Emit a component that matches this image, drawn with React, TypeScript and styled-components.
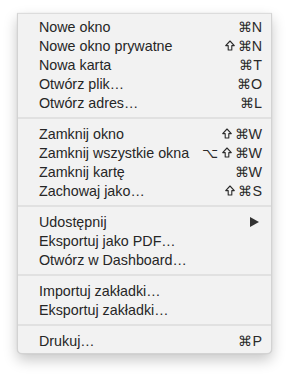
import React from "react"
import styled, { createGlobalStyle } from "styled-components"

const GlobalStyle = createGlobalStyle`
  html, body {
    margin: 0;
    padding: 0;
    background: #ffffff;
  }
  body {
    font-family: "Liberation Sans", Arial, sans-serif;
    -webkit-font-smoothing: antialiased;
  }
`

const Page = styled.div`
  width: 289px;
  height: 375px;
  padding: 13px 0 0 17px;
  box-sizing: border-box;
`

const Menu = styled.div`
  width: 255px;
  box-sizing: border-box;
  background: #f2f2f2;
  border: 1px solid #d3d3d3;
  border-top-color: #dcdcdc;
  border-radius: 0 0 5px 5px;
  padding: 3px 0 3px;
  box-shadow: 0 6px 14px rgba(0, 0, 0, 0.22), 0 0 1px rgba(0, 0, 0, 0.2);
`

const Item = styled.div`
  display: flex;
  align-items: center;
  justify-content: space-between;
  height: 19px;
  padding: 0 9px 0 21px;
  font-size: 14.3px;
  color: #262626;
  white-space: nowrap;
`

const Shortcut = styled.span`
  display: flex;
  align-items: center;
  gap: 1px;
  color: #2a2a2a;
`

const OptionKey = styled.span`
  margin-right: 3px;
`

const ShiftIcon = styled.svg`
  width: 10px;
  height: 11px;
  margin-right: 2px;
`

const Separator = styled.div`
  height: 2px;
  background: #e1e1e1;
  margin: 5px 0;
`

const Arrow = styled.svg`
  width: 9px;
  height: 10px;
  margin-right: 3px;
`

type Entry =
  | { label: string; keys?: string; option?: boolean; shift?: boolean; submenu?: boolean }
  | "sep"

const entries: Entry[] = [
  { label: "Nowe okno", keys: "⌘N" },
  { label: "Nowe okno prywatne", shift: true, keys: "⌘N" },
  { label: "Nowa karta", keys: "⌘T" },
  { label: "Otwórz plik…", keys: "⌘O" },
  { label: "Otwórz adres…", keys: "⌘L" },
  "sep",
  { label: "Zamknij okno", shift: true, keys: "⌘W" },
  { label: "Zamknij wszystkie okna", option: true, shift: true, keys: "⌘W" },
  { label: "Zamknij kartę", keys: "⌘W" },
  { label: "Zachowaj jako…", shift: true, keys: "⌘S" },
  "sep",
  { label: "Udostępnij", submenu: true },
  { label: "Eksportuj jako PDF…" },
  { label: "Otwórz w Dashboard…" },
  "sep",
  { label: "Importuj zakładki…" },
  { label: "Eksportuj zakładki…" },
  "sep",
  { label: "Drukuj…", keys: "⌘P" },
]

const Shift = () => (
  <ShiftIcon viewBox="0 0 10 11">
    <path
      d="M5 1 L9.3 5.6 H6.8 V10 H3.2 V5.6 H0.7 Z"
      fill="none"
      stroke="#2a2a2a"
      strokeWidth="1.1"
      strokeLinejoin="round"
    />
  </ShiftIcon>
)

export default function App() {
  return (
    <Page>
      <GlobalStyle />
      <Menu>
        {entries.map((e, i) =>
          e === "sep" ? (
            <Separator key={i} />
          ) : (
            <Item key={i}>
              <span>{e.label}</span>
              {e.keys && (
                <Shortcut>
                  {e.option && <OptionKey>⌥</OptionKey>}
                  {e.shift && <Shift />}
                  {e.keys}
                </Shortcut>
              )}
              {e.submenu && (
                <Arrow viewBox="0 0 9 10">
                  <path d="M0 0 L9 5 L0 10 Z" fill="#333" />
                </Arrow>
              )}
            </Item>
          )
        )}
      </Menu>
    </Page>
  )
}
